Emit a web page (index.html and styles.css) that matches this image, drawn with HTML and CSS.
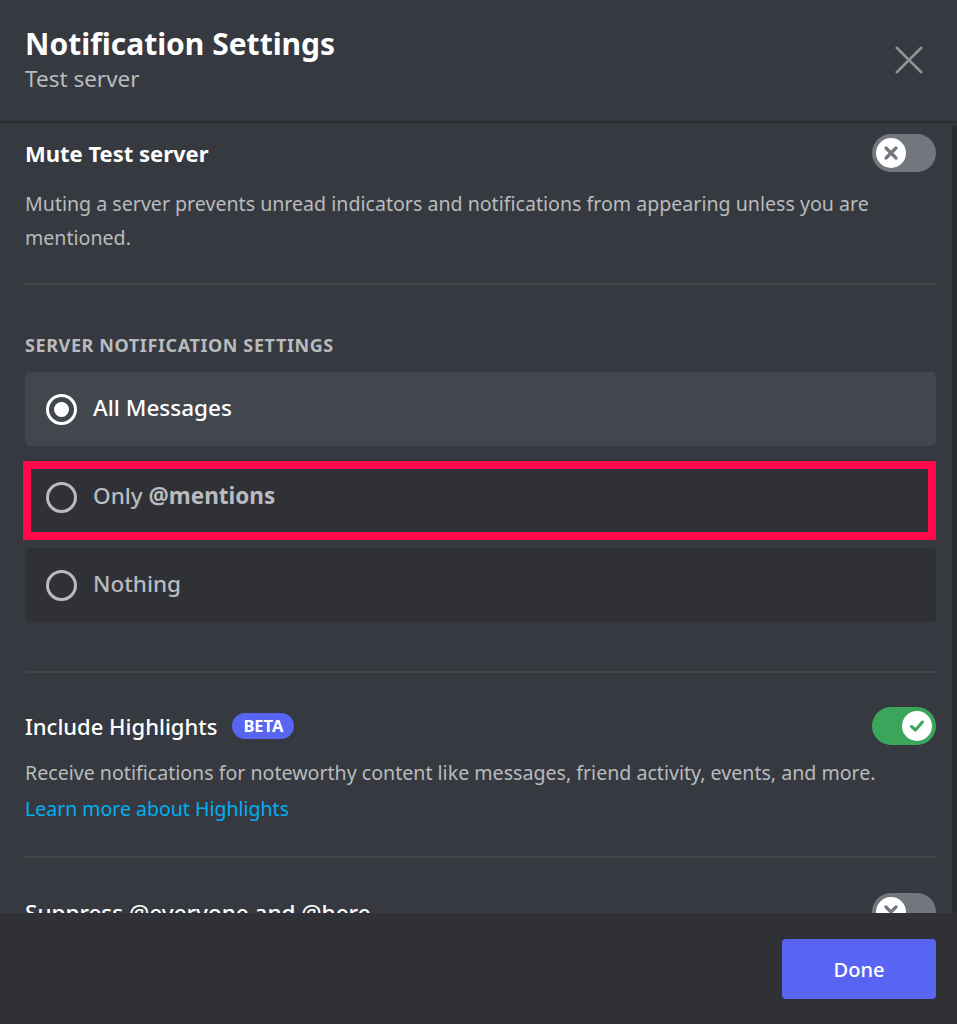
FILE: index.html
```html
<!DOCTYPE html>
<html lang="en">
<head>
<meta charset="utf-8">
<title>Notification Settings</title>
<link rel="stylesheet" href="styles.css">
</head>
<body>
<div class="modal">
  <header class="header">
    <div class="header-text">
      <h1 class="title">Notification Settings</h1>
      <div class="subtitle">Test server</div>
    </div>
    <button class="close" aria-label="Close">
      <svg width="28" height="28" viewBox="0 0 28 28"><path d="M1 1 L27 27 M27 1 L1 27" stroke="#8e9297" stroke-width="2.6" fill="none"/></svg>
    </button>
  </header>

  <div class="body">
    <div class="content">
      <div class="row">
        <div class="row-title">Mute Test server</div>
        <div class="toggle off">
          <span class="knob"><svg width="20" height="20" viewBox="0 0 20 20"><path d="M5 5 L15 15 M15 5 L5 15" stroke="#72767d" stroke-width="3.2" stroke-linecap="round"/></svg></span>
        </div>
      </div>
      <p class="desc">Muting a server prevents unread indicators and notifications from appearing unless you are mentioned.</p>

      <div class="divider div-1"></div>

      <div class="label">Server Notification Settings</div>
      <div class="radios">
        <div class="radio selected">
          <span class="circle"><span class="dot"></span></span>
          <span class="radio-text">All Messages</span>
        </div>
        <div class="radio">
          <span class="circle"></span>
          <span class="radio-text">Only <b>@mentions</b></span>
          <span class="highlight"></span>
        </div>
        <div class="radio">
          <span class="circle"></span>
          <span class="radio-text">Nothing</span>
        </div>
      </div>

      <div class="divider div-2"></div>

      <div class="row row-hl">
        <div class="row-title medium">Include Highlights <span class="beta">BETA</span></div>
        <div class="toggle on">
          <span class="knob"><svg width="20" height="20" viewBox="0 0 20 20"><path d="M4.5 10.5 L8.5 14 L15.5 6" stroke="#3ba55c" stroke-width="3" fill="none" stroke-linecap="round" stroke-linejoin="round"/></svg></span>
        </div>
      </div>
      <p class="desc desc-hl">Receive notifications for noteworthy content like messages, friend activity, events, and more.</p>
      <a class="link" href="#">Learn more about Highlights</a>

      <div class="divider div-3"></div>

      <div class="row row-sup">
        <div class="row-title medium">Suppress @everyone and @here</div>
        <div class="toggle off">
          <span class="knob"><svg width="20" height="20" viewBox="0 0 20 20"><path d="M5 5 L15 15 M15 5 L5 15" stroke="#72767d" stroke-width="3.2" stroke-linecap="round"/></svg></span>
        </div>
      </div>
    </div>
    <div class="scrollbar"></div>
  </div>

  <footer class="footer">
    <button class="done">Done</button>
  </footer>
</div>
</body>
</html>
```

FILE: styles.css
```css
* { box-sizing: border-box; }
html, body { margin: 0; padding: 0; }
body {
  background: #36393f;
  font-family: "Noto Sans", Lato, sans-serif;
  color: #dcddde;
  width: 957px;
  height: 1024px;
  overflow: hidden;
}
.modal {
  width: 957px;
  height: 1024px;
  display: flex;
  flex-direction: column;
  background: #36393f;
}
.header {
  height: 123px;
  flex: none;
  display: flex;
  justify-content: space-between;
  align-items: flex-start;
  padding: 26px 34px 0 25px;
  border-bottom: 2px solid #2b2d31;
}
.title {
  margin: 0;
  font-size: 30px;
  line-height: 36px;
  font-weight: 700;
  color: #ffffff;
}
.subtitle {
  font-size: 22.5px;
  line-height: 28px;
  color: #b9bbbe;
  margin-top: 3px;
}
.close {
  background: none;
  border: 0;
  padding: 0;
  margin-top: 20px;
  width: 28px;
  height: 28px;
  display: flex;
}
.body {
  flex: 1;
  display: flex;
  overflow: hidden;
  min-height: 0;
}
.content {
  flex: 1;
  padding: 11px 0 0 25px;
  margin-right: 16px;
}
.scrollbar {
  width: 8px;
  margin-top: 2px;
  background: #2a2c30;
  border-radius: 4px 0 0 0;
  flex: none;
  margin-right: -3px;
}
.row {
  display: flex;
  justify-content: space-between;
  align-items: center;
  height: 38px;
}
.row-title {
  font-size: 22px;
  font-weight: 700;
  color: #ffffff;
  display: flex;
  align-items: center;
}
.row-title.medium { font-weight: 500; }
.row-sup .row-title { font-size: 22.5px; }
.toggle {
  width: 64px;
  height: 38px;
  border-radius: 19px;
  position: relative;
  flex: none;
  display: flex;
  align-items: center;
  padding: 0 4px;
}
.toggle.off { background: #72767d; justify-content: flex-start; }
.toggle.on { background: #3ba55c; justify-content: flex-end; }
.knob {
  width: 30px;
  height: 30px;
  border-radius: 50%;
  background: #ffffff;
  display: flex;
  align-items: center;
  justify-content: center;
}
.desc {
  margin: 15px 0 0;
  font-size: 19.6px;
  line-height: 34px;
  color: #b9bbbe;
  padding-right: 30px;
}
.divider {
  height: 2px;
  background: #42454a;
}
.div-1 { margin-top: 28px; }
.label {
  margin-top: 49px;
  font-size: 18px;
  line-height: 22px;
  font-weight: 700;
  text-transform: uppercase;
  color: #b9bbbe;
  letter-spacing: 0.6px;
}
.radios {
  margin-top: 16px;
  display: flex;
  flex-direction: column;
  gap: 14px;
}
.radio {
  position: relative;
  height: 74px;
  border-radius: 5px;
  background: #2f3136;
  display: flex;
  align-items: center;
  padding-left: 21px;
  gap: 16px;
}
.radio.selected { background: #42464d; }
.circle {
  width: 31px;
  height: 31px;
  border-radius: 50%;
  border: 3px solid #b9bbbe;
  display: flex;
  align-items: center;
  justify-content: center;
  flex: none;
}
.radio.selected .circle { border-color: #ffffff; }
.dot {
  width: 15px;
  height: 15px;
  border-radius: 50%;
  background: #ffffff;
}
.radio-text {
  font-size: 22.5px;
  color: #b9bbbe;
  font-weight: 500;
  margin-top: -3px;
}
.radio-text b { font-weight: 700; }
.radio.selected .radio-text { color: #ffffff; }
.highlight {
  position: absolute;
  left: -2px;
  right: 0;
  top: 1px;
  bottom: -6px;
  border: 8.5px solid #ff0a4d;
}
.div-2 { margin-top: 49px; }
.row-hl { margin-top: 34px; }
.beta {
  margin-left: 15px;
  background: #5865f2;
  color: #ffffff;
  font-size: 16.5px;
  font-weight: 700;
  height: 26px;
  line-height: 26px;
  padding: 0 11px;
  border-radius: 13px;
}
.desc-hl { margin-top: 11px; }
.link {
  display: block;
  font-size: 19.5px;
  line-height: 34px;
  color: #00aff4;
  text-decoration: none;
  margin-top: 2px;
}
.div-3 { margin-top: 30px; }
.row-sup { margin-top: 35px; }
.footer {
  height: 111px;
  flex: none;
  background: #2f3136;
  display: flex;
  justify-content: flex-end;
  align-items: flex-start;
  padding: 26px 21px 0 0;
}
.done {
  width: 154px;
  height: 60px;
  border: 0;
  border-radius: 4px;
  background: #5865f2;
  color: #ffffff;
  font-family: inherit;
  font-size: 20px;
  font-weight: 500;
}
```
